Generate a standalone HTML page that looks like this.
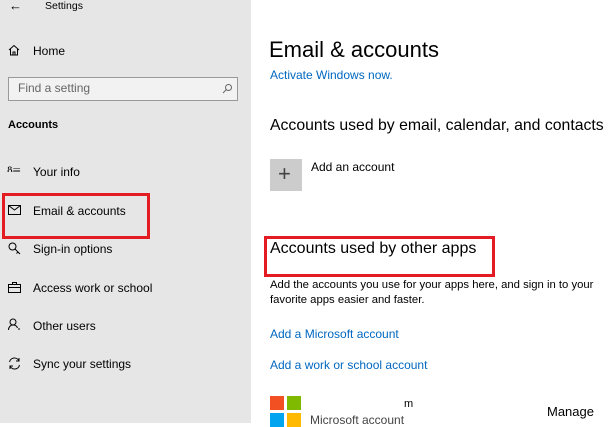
<!DOCTYPE html>
<html><head><style>
body{margin:0;width:613px;height:423px;overflow:hidden;background:#fff;font-family:"Liberation Sans",sans-serif;position:relative;color:#000}
.a{position:absolute;white-space:nowrap}
#side{position:absolute;left:0;top:0;width:251px;height:423px;background:#e6e6e6}
.n{font-size:12px}
.ic{position:absolute;left:8px}
.blue{color:#0067c0;font-size:12px}
</style></head><body>
<div id="side">
<div class="a" style="left:9px;top:-2px;font-size:13px">←</div>
<div class="a" style="left:45px;top:0px;font-size:10.5px">Settings</div>
<svg class="ic" style="top:44px" width="12" height="12" viewBox="0 0 12 12" fill="none" stroke="#000"><path d="M1 6L6 1.5 11 6M2.5 5v6h7V5M5 11V8h2v3"/></svg>
<div class="a n" style="left:33px;top:44px">Home</div>
<div class="a" style="left:8px;top:77px;width:228px;height:22px;border:1px solid #999;background:#f2f2f2"></div>
<div class="a" style="left:18px;top:81px;font-size:12px;color:#666">Find a setting</div>
<svg class="a" style="left:222px;top:83px" width="11" height="11" viewBox="0 0 11 11" fill="none" stroke="#666"><circle cx="6.5" cy="4.5" r="3"/><path d="M4.5 6.5L1 10"/></svg>
<div class="a" style="left:8px;top:119px;font-size:11px;font-weight:bold">Accounts</div>
<div class="a" style="left:7px;top:164px;font-size:10px">ጸ☰</div>
<div class="a n" style="left:33px;top:165px">Your info</div>
<div class="a" style="left:2px;top:193px;width:142px;height:40px;border:3px solid #e41b23"></div>
<svg class="ic" style="top:205px" width="13" height="10" viewBox="0 0 13 10" fill="none" stroke="#000"><rect x="0.5" y="0.5" width="12" height="9"/><path d="M0.5 0.5L6.5 5 12.5 0.5"/></svg>
<div class="a n" style="left:33px;top:204px">Email &amp; accounts</div>
<svg class="ic" style="top:242px" width="13" height="13" viewBox="0 0 13 13" fill="none" stroke="#000"><circle cx="4.5" cy="4.5" r="3.5"/><path d="M7 7l5 5M10 10l-1.5 1.5"/></svg>
<div class="a n" style="left:33px;top:242px">Sign-in options</div>
<svg class="ic" style="top:282px" width="13" height="11" viewBox="0 0 13 11" fill="none" stroke="#000"><rect x="0.5" y="2.5" width="12" height="8"/><path d="M4.5 2.5V0.5h4v2M0.5 5.5h12"/></svg>
<div class="a n" style="left:33px;top:281px">Access work or school</div>
<svg class="ic" style="top:318px" width="13" height="13" viewBox="0 0 13 13" fill="none" stroke="#000"><circle cx="5" cy="4" r="3"/><path d="M0.5 12c0-3 2-5 4.5-5s4 1.5 4.5 3M10 11h2"/></svg>
<div class="a n" style="left:33px;top:319px">Other users</div>
<svg class="ic" style="top:357px" width="13" height="13" viewBox="0 0 13 13" fill="none" stroke="#000"><path d="M1.5 5A5 5 0 0 1 11 4M11.5 8A5 5 0 0 1 2 9M11 1v3H8M2 12V9h3"/></svg>
<div class="a n" style="left:33px;top:357px">Sync your settings</div>
</div>
<div class="a" style="left:269px;top:37px;font-size:22px">Email &amp; accounts</div>
<div class="a blue" style="left:270px;top:68px">Activate Windows now.</div>
<div class="a" style="left:270px;top:117px;font-size:15.8px">Accounts used by email, calendar, and contacts</div>
<div class="a" style="left:270px;top:159px;width:32px;height:32px;background:#ccc"></div>
<div class="a" style="left:278px;top:161px;font-size:22px;color:#444;font-weight:300">+</div>
<div class="a" style="left:311px;top:160px;font-size:12px">Add an account</div>
<div class="a" style="left:264px;top:236px;width:225px;height:35px;border:3px solid #e41b23"></div>
<div class="a" style="left:270px;top:240px;font-size:16px">Accounts used by other apps</div>
<div class="a" style="left:270px;top:278px;font-size:11.3px;line-height:15px">Add the accounts you use for your apps here, and sign in to your<br>favorite apps easier and faster.</div>
<div class="a blue" style="left:270px;top:327px">Add a Microsoft account</div>
<div class="a blue" style="left:270px;top:358px">Add a work or school account</div>
<div class="a" style="left:270px;top:396px;width:14px;height:14px;background:#f25022"></div>
<div class="a" style="left:287px;top:396px;width:14px;height:14px;background:#7fba00"></div>
<div class="a" style="left:270px;top:413px;width:14px;height:14px;background:#00a4ef"></div>
<div class="a" style="left:287px;top:413px;width:14px;height:14px;background:#ffb900"></div>
<div class="a" style="left:404px;top:398px;font-size:11px">m</div>
<div class="a" style="left:310px;top:413px;font-size:12px;color:#444">Microsoft account</div>
<div class="a" style="left:547px;top:404px;font-size:13px">Manage</div>
</body></html>
